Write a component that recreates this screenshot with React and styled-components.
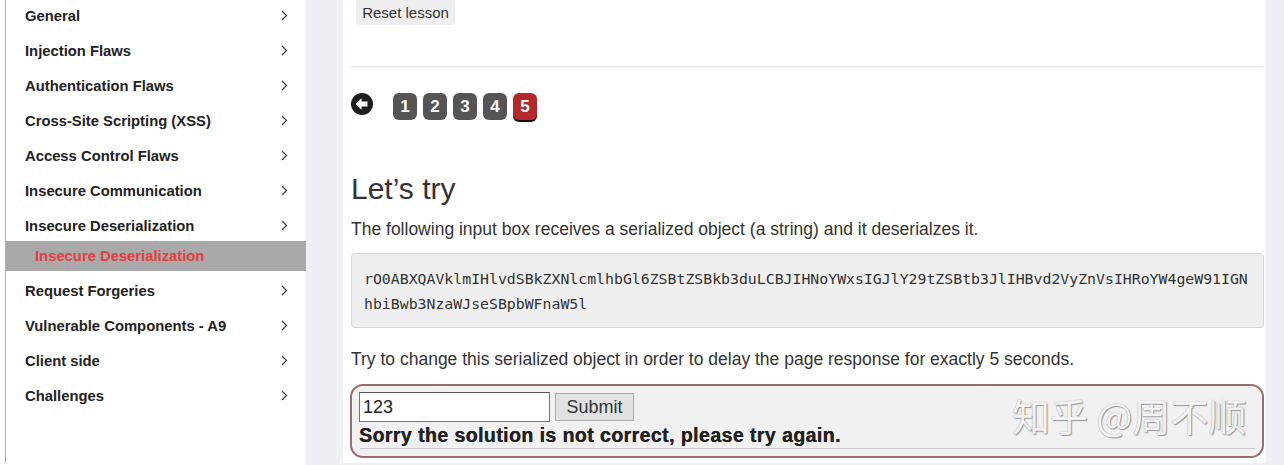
import React from "react";
import styled, { createGlobalStyle } from "styled-components";

const Global = createGlobalStyle`
  html, body { margin: 0; padding: 0; }
  body {
    background: #eef0f5;
    font-family: "Liberation Sans", Arial, sans-serif;
    color: #333;
    overflow: hidden;
  }
`;

const Page = styled.div`
  display: grid;
  grid-template-columns: 306px 923px;
  column-gap: 37px;
  height: 465px;
  overflow: hidden;
`;

const Sidebar = styled.nav`
  background: #fff;
  padding-left: 5px;
  height: 465px;
`;

const SideInner = styled.div`
  border-left: 1px solid #a3b2c8;
  height: 100%;
  margin-top: -2px;
`;

const Category = styled.div`
  display: flex;
  align-items: center;
  justify-content: space-between;
  height: 35px;
  padding: 0 18px 0 19px;
  font-size: 14.8px;
  font-weight: bold;
  color: #222;
`;

const SubMenu = styled.div`
  margin: -2px 0 2px;
`;

const SubItem = styled.div`
  height: 30px;
  display: flex;
  align-items: center;
  padding-left: 29px;
  background: #a9a9a9;
  color: #e2403e;
  font-size: 14.8px;
  font-weight: bold;
`;

const Chevron = () => (
  <svg width="7" height="11" viewBox="0 0 7 11">
    <path d="M1 1 L5.5 5.5 L1 10" fill="none" stroke="#444" strokeWidth="1.3" />
  </svg>
);

const Main = styled.main`
  background: #fff;
  height: 463px;
  padding: 0 2px 0 7px;
  box-sizing: border-box;
  position: relative;
`;

const TopBox = styled.div`
  height: 66px;
  border-bottom: 1px solid #eaeaea;
  box-shadow: 0 1px 1px rgba(0, 0, 0, 0.03);
  margin-right: 1px;
  padding-left: 6px;
`;

const ResetButton = styled.button`
  font-family: "Liberation Sans", Arial, sans-serif;
  font-size: 15px;
  color: #333;
  background: #eeeeee;
  border: none;
  border-radius: 3px;
  height: 30px;
  margin-top: -5px;
  padding: 5px 0 0;
  width: 99px;
  white-space: nowrap;
  text-align: center;
`;

const NavRow = styled.div`
  display: flex;
  align-items: flex-start;
  margin-top: 26px;
  padding-left: 1px;
  height: 27px;
`;

const Back = styled.span`
  display: block;
  width: 22px;
  height: 22px;
  margin-right: 20px;
`;

const Badges = styled.div`
  display: flex;
  gap: 6px;
`;

const Badge = styled.span`
  width: 24px;
  height: 27px;
  border-radius: 6px;
  display: flex;
  align-items: center;
  justify-content: center;
  color: #fff;
  font-weight: bold;
  font-size: 17px;
  background: ${(p) => (p.$active ? "#b3282a" : "#555555")};
  box-shadow: ${(p) => (p.$active ? "0 2px 0 #111" : "none")};
  box-sizing: border-box;
  padding-top: 1px;
`;

const Heading = styled.h2`
  margin: 51px 0 0 1px;
  font-size: 30px;
  font-weight: normal;
  line-height: 36px;
  color: #333;
`;

const Para = styled.p`
  margin: ${(p) => p.$mt}px 0 0 1px;
  font-size: 17.5px;
  line-height: 24px;
  color: #333;
`;

const Code = styled.pre`
  margin: 12px 0 0 1px;
  height: 75px;
  box-sizing: border-box;
  background: #efefef;
  border: 1px solid #d6d6d6;
  border-radius: 4px;
  padding: 12px 13px 0 12px;
  font-family: "DejaVu Sans Mono", "Liberation Mono", monospace;
  font-size: 14.83px;
  line-height: 25px;
  color: #333;
  white-space: pre-wrap;
  word-break: break-all;
`;

const Attack = styled.div`
  margin-top: 13px;
  height: 74px;
  box-sizing: border-box;
  border: 2px solid #9e6b6b;
  border-radius: 13px;
  background: #f1f1f1;
  padding: 6px 7px 0 7px;
`;

const FormRow = styled.div`
  display: flex;
  align-items: center;
  gap: 5px;
`;

const Input = styled.input`
  width: 191px;
  height: 30px;
  box-sizing: border-box;
  border: 1px solid #767676;
  border-top-color: #555;
  font-family: "Liberation Sans", Arial, sans-serif;
  font-size: 18px;
  padding: 0 3px;
  color: #222;
  background: #fff;
`;

const Submit = styled.button`
  width: 79px;
  height: 28px;
  background: #e1e1e1;
  border: 1px solid #adadad;
  font-family: "Liberation Sans", Arial, sans-serif;
  font-size: 18px;
  color: #333;
  padding: 0;
`;

const Feedback = styled.div`
  font-weight: bold;
  font-size: 19.5px;
  letter-spacing: 0.43px;
  color: #222;
  line-height: 22px;
  margin-top: 2px;
  white-space: nowrap;
  text-shadow: 0.3px 0 0 #222;
`;

const Rule = styled.hr`
  margin: 2px 0 0 1px;
  border: none;
  border-top: 1px solid #c8c8c8;
`;

const Watermark = styled.div`
  position: absolute;
  left: 669px;
  top: 387px;
  font-family: "Noto Sans CJK SC", "Liberation Sans", sans-serif;
  font-size: 38px;
  color: rgba(255, 255, 255, 0.92);
  text-shadow: 0 0 1px #888, 1px 1px 1px #999;
  pointer-events: none;
  white-space: nowrap;
`;

const categoriesTop = [
  "General",
  "Injection Flaws",
  "Authentication Flaws",
  "Cross-Site Scripting (XSS)",
  "Access Control Flaws",
  "Insecure Communication",
  "Insecure Deserialization",
];
const categoriesBottom = [
  "Request Forgeries",
  "Vulnerable Components - A9",
  "Client side",
  "Challenges",
];

export default function App() {
  return (
    <>
      <Global />
      <Page>
        <Sidebar>
          <SideInner>
            {categoriesTop.map((c) => (
              <Category key={c}>
                {c}
                <Chevron />
              </Category>
            ))}
            <SubMenu>
              <SubItem>Insecure Deserialization</SubItem>
            </SubMenu>
            {categoriesBottom.map((c) => (
              <Category key={c}>
                {c}
                <Chevron />
              </Category>
            ))}
          </SideInner>
        </Sidebar>
        <Main>
          <TopBox>
            <ResetButton>Reset lesson</ResetButton>
          </TopBox>
          <NavRow>
            <Back>
              <svg width="22" height="22" viewBox="0 0 22 22">
                <circle cx="11" cy="11" r="11" fill="#1e1e1e" />
                <path d="M4.5 11 L10.5 5.2 L10.5 8.6 L16.5 8.6 L16.5 13.4 L10.5 13.4 L10.5 16.8 Z" fill="#fff" />
              </svg>
            </Back>
            <Badges>
              {[1, 2, 3, 4, 5].map((n) => (
                <Badge key={n} $active={n === 5}>
                  {n}
                </Badge>
              ))}
            </Badges>
          </NavRow>
          <Heading>Let’s try</Heading>
          <Para $mt={10}>
            The following input box receives a serialized object (a string) and it deserialzes it.
          </Para>
          <Code>
            rO0ABXQAVklmIHlvdSBkZXNlcmlhbGl6ZSBtZSBkb3duLCBJIHNoYWxsIGJlY29tZSBtb3JlIHBvd2VyZnVsIHRoYW4geW91IGNhbiBwb3NzaWJseSBpbWFnaW5l
          </Code>
          <Para $mt={19}>
            Try to change this serialized object in order to delay the page response for exactly 5 seconds.
          </Para>
          <Attack>
            <FormRow>
              <Input defaultValue="123" />
              <Submit>Submit</Submit>
            </FormRow>
            <Feedback>Sorry the solution is not correct, please try again.</Feedback>
            <Rule />
          </Attack>
          <Watermark>知乎 @周不顺</Watermark>
        </Main>
      </Page>
    </>
  );
}
